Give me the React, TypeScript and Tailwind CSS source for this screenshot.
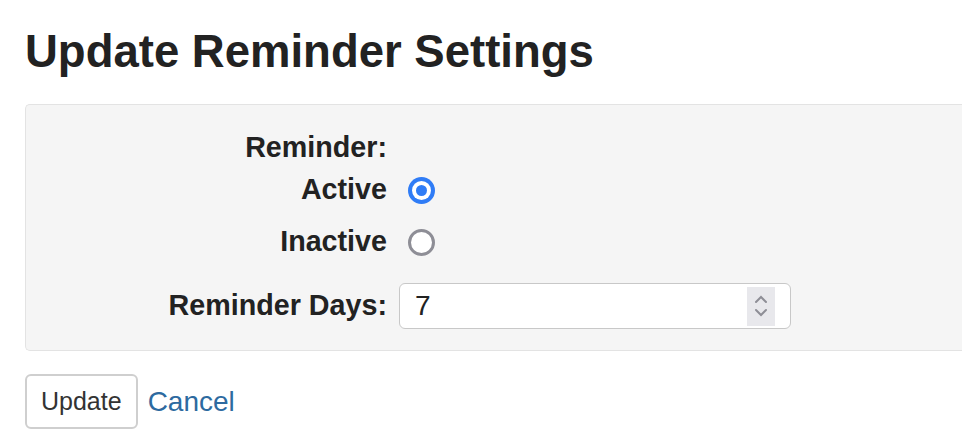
export default function App() {
  return (
    <div className="min-h-screen bg-white font-['Liberation_Sans',Arial,sans-serif] text-[#222]">
      <div className="pl-[25px] pt-[24px]">
        <h1 className="text-[45.5px] font-bold leading-[56px]">Update Reminder Settings</h1>

        <div className="mt-[24px] rounded-tl-[5px] rounded-bl-[5px] border border-r-0 border-[#e3e3e3] bg-[#f5f5f5] pb-[21px] pt-[23px]">
          <div className="flex h-[40px] items-center">
            <div className="w-[361px] text-right text-[28.7px] font-bold">Reminder:</div>
          </div>
          <div className="flex h-[44px] items-center gap-[21px]">
            <div className="w-[361px] text-right text-[28.7px] font-bold">Active</div>
            <span className="flex h-[27px] w-[27px] items-center justify-center rounded-full bg-[#2f7cf6]">
              <span className="flex h-[19px] w-[19px] items-center justify-center rounded-full bg-white">
                <span className="h-[11px] w-[11px] rounded-full bg-[#2f7cf6]" />
              </span>
            </span>
          </div>
          <div className="mt-[8px] flex h-[44px] items-center gap-[21px]">
            <div className="w-[361px] text-right text-[28.7px] font-bold">Inactive</div>
            <span className="h-[27px] w-[27px] rounded-full border-[3.5px] border-[#8e8e96] bg-white" />
          </div>
          <div className="mt-[19px] flex items-center gap-[12px]">
            <label className="w-[361px] text-right text-[28.7px] font-bold">Reminder Days:</label>
            <div className="flex h-[46px] w-[392px] items-center justify-between rounded-[6px] border border-[#c8c8c8] bg-white pl-[15px] pr-[15px]">
              <span className="text-[28px]">7</span>
              <span className="flex h-[39px] w-[28px] flex-col items-center justify-center gap-[2px] bg-[#e8e8ec]">
                <svg width="14" height="10" viewBox="0 0 14 10" fill="none" stroke="#8e8e96" strokeWidth="2" strokeLinecap="round">
                  <path d="M2 7 L7 2 L12 7" />
                </svg>
                <svg width="14" height="10" viewBox="0 0 14 10" fill="none" stroke="#8e8e96" strokeWidth="2" strokeLinecap="round">
                  <path d="M2 3 L7 8 L12 3" />
                </svg>
              </span>
            </div>
          </div>
        </div>

        <div className="mt-[23px] flex items-center gap-[10px]">
          <button className="h-[55px] rounded-[6px] border-2 border-[#cfcfcf] bg-white px-[14px] text-[25px] text-[#333]">
            Update
          </button>
          <a href="#" className="text-[28px] text-[#2d6aa0]">Cancel</a>
        </div>
      </div>
    </div>
  )
}
